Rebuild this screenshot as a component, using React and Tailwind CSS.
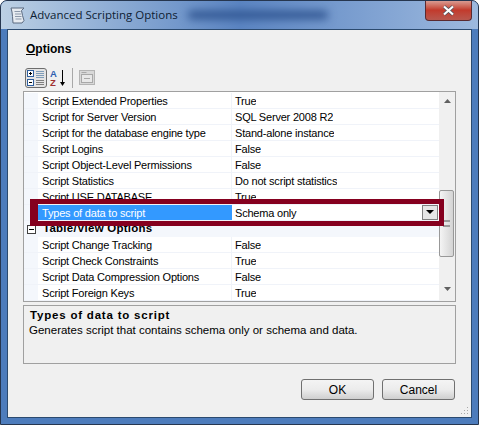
import React from 'react';

const topRows = [
    ['Script Extended Properties', 'True'],
    ['Script for Server Version', 'SQL Server 2008 R2'],
    ['Script for the database engine type', 'Stand-alone instance'],
    ['Script Logins', 'False'],
    ['Script Object-Level Permissions', 'False'],
    ['Script Statistics', 'Do not script statistics'],
    ['Script USE DATABASE', 'True'],
];

const tableRows = [
    ['Script Change Tracking', 'False'],
    ['Script Check Constraints', 'True'],
    ['Script Data Compression Options', 'False'],
    ['Script Foreign Keys', 'True'],
];

const Row = ({ name, value }) => (
    <div className="flex h-4 border-b border-[#f0f3f9]">
        <div className="w-[14px] shrink-0 bg-[#f4f7fc]" />
        <div className="w-[194px] shrink-0 pl-1 leading-[17px] truncate border-r border-[#f0f3f9]">{name}</div>
        <div className="pl-[3px] leading-[17px] truncate">{value}</div>
    </div>
);

const CategorizedIcon = () => (
    <svg width="18" height="16" viewBox="0 0 18 16">
        <rect x="0.5" y="0.5" width="6" height="6" fill="#fff" stroke="#2f5f9e" />
        <path d="M2 3.5h3M3.5 2v3" stroke="#000" />
        <rect x="0.5" y="9.5" width="6" height="6" fill="#fff" stroke="#2f5f9e" />
        <path d="M2 12.5h3" stroke="#000" />
        <path d="M9 1.5h8M9 3.5h8M9 5.5h8M9 7.5h8" stroke="#7f9db9" />
        <path d="M9 10.5h8M9 12.5h8M9 14.5h8" stroke="#7f7f7f" />
    </svg>
);

// A and Z stacked in two separate labels so they do not collide
const SortIcon = () => (
    <div className="flex items-start">
        <div className="flex w-[9px] flex-col text-[9.5px] font-bold leading-[9px]">
            <span className="text-[#2f5fb0]">A</span>
            <span className="text-[#a03030]">Z</span>
        </div>
        <svg width="7" height="18" viewBox="0 0 7 18">
            <path d="M3.5 1v13" stroke="#000" />
            <path d="M1 13h5l-2.5 4z" fill="#000" />
        </svg>
    </div>
);

const PagesIcon = () => (
    <svg width="16" height="15" viewBox="0 0 16 15">
        <rect x="0.5" y="0.5" width="15" height="14" fill="#d8d8d8" stroke="#b4b4b4" />
        <rect x="2.5" y="4.5" width="11" height="8" fill="#e8e8e8" stroke="#a8a8a8" />
        <path d="M2.5 2.5h5M5 8.5h6" stroke="#a8a8a8" />
    </svg>
);

const ScrollIcon = () => (
    <svg width="17" height="17" viewBox="0 0 17 17">
        <path d="M2 1h13l-2.5 2.5 1 5 1.5 5-2 2.5H4l-.5-6.5L3 5z" fill="#e6ebf1" stroke="#5b6a80" />
        <path d="M5.5 4.5h6M6 7h6M6 9.5h6.5M6.5 12h6" stroke="#8b98aa" />
    </svg>
);

const Btn = ({ children }) => (
    <button className="w-[73px] h-[21px] rounded-[3px] border border-[#707070] bg-gradient-to-b from-[#f4f4f4] via-[#ececec] to-[#cfcfcf] text-[12px] leading-none text-black">
        {children}
    </button>
);

export default function App() {
    return (
        <div
            className="relative w-[479px] h-[425px] flex flex-col overflow-hidden rounded-t-[7px] border border-[#26364f] bg-[#4d7cbc] text-[11px] text-black font-['Liberation_Sans',Arial,sans-serif]"
        >
            <div className="flex h-[28px] shrink-0 items-center pl-[8px] bg-gradient-to-r from-[#bcd0e4] via-[#5b85c2] to-[#9db9de]">
                <ScrollIcon />
                <span className="ml-[4px] text-[11.5px] text-[#0e1d33] font-['Open_Sans',sans-serif]">
                    Advanced Scripting Options
                </span>
                <div className="ml-[10px] w-[140px] h-[8px] rounded-full bg-[#2f5490] blur-[4px]" />
            </div>

            {/* close button */}
            <div className="absolute top-[-1px] right-[6px] flex h-[21px] w-[47px] items-center justify-center rounded-b-[4px] border border-t-0 border-[#5a2a30] bg-gradient-to-b from-[#d9a49c] via-[#c23a2c] to-[#b8574e]">
                <svg width="13" height="11" viewBox="0 0 13 11">
                    <path d="M2 1.5l9 8M11 1.5l-9 8" stroke="#4a5560" strokeWidth="3.6" />
                    <path d="M2 1.5l9 8M11 1.5l-9 8" stroke="#fff" strokeWidth="2.2" />
                </svg>
            </div>

            <div className="relative mx-[6px] flex h-[389px] flex-col border border-[#2b4a6f] bg-[#f0f0f0] pl-[15px] pr-[15px]">
                <div className="mt-[12px] ml-[3px] h-[14px] text-[12px] font-bold leading-[14px]">
                    <span className="underline">O</span>ptions
                </div>

                <div className="mt-[11px] flex h-[21px] items-center">
                    <div className="ml-[2px] flex h-[20px] w-[22px] items-center justify-center rounded-[3px] border border-[#6d6d6d] bg-[#e4e4e4]">
                        <CategorizedIcon />
                    </div>
                    <div className="ml-[3px]"><SortIcon /></div>
                    <div className="ml-[6px] h-[20px] w-px bg-[#a8a8a8]" />
                    <div className="ml-[6px]"><PagesIcon /></div>
                </div>

                <div className="mt-[3px] flex h-[211px] border border-[#a0a0a0] bg-white">
                    <div className="min-w-0 flex-1 overflow-hidden pt-px tracking-[-0.2px]">
                        {topRows.map(([n, v]) => <Row key={n} name={n} value={v} />)}
                        <div className="flex h-4 border-b border-[#f0f3f9]">
                            <div className="w-[14px] shrink-0 bg-[#f4f7fc]" />
                            <div className="w-[194px] shrink-0 bg-[#3399ff] pl-1 leading-[17px] text-white">Types of data to script</div>
                            <div className="flex-1 pl-[3px] leading-[17px]">Schema only</div>
                            <div className="mr-px flex h-[15px] w-4 items-center justify-center border border-[#808080] bg-[#e6e6e6]">
                                <svg width="8" height="5" viewBox="0 0 8 5"><path d="M0 0h8L4 4z" fill="#000" /></svg>
                            </div>
                        </div>
                        <div className="flex h-4 items-center bg-[#f4f7fc]">
                            <div className="flex w-[14px] shrink-0 justify-center">
                                <div className="flex h-[9px] w-[9px] items-center justify-center border border-[#404040] bg-white">
                                    <div className="h-px w-[5px] bg-black" />
                                </div>
                            </div>
                            <div className="pl-[5px] text-[11.5px] font-bold tracking-[0.25px]">Table/View Options</div>
                        </div>
                        {tableRows.map(([n, v]) => <Row key={n} name={n} value={v} />)}
                    </div>

                    <div className="flex w-4 shrink-0 flex-col items-center bg-[#f0f0f0]">
                        <svg className="mt-[7px]" width="7" height="4" viewBox="0 0 7 4"><path d="M3.5 0L7 4H0z" fill="#606060" /></svg>
                        <div className="mt-[87px] flex h-[67px] w-[15px] items-center justify-center self-start rounded-[2px] border border-[#989898] bg-gradient-to-r from-[#f4f4f4] to-[#d4d4d4]">
                            <div className="h-[7px] w-[7px] border-y-2 border-[#9a9a9a]" />
                        </div>
                        <svg className="mt-[30px]" width="7" height="4" viewBox="0 0 7 4"><path d="M0 0h7L3.5 4z" fill="#606060" /></svg>
                    </div>
                </div>

                <div className="mt-[3px] h-[59px] border border-[#a0a0a0] px-[5px] pt-[2px] text-[11.5px] leading-[15px]">
                    <div className="pl-px font-bold tracking-[0.8px]">Types of data to script</div>
                    <div>Generates script that contains schema only or schema and data.</div>
                </div>

                <div className="mt-[15px] flex justify-end gap-2 pr-px">
                    <Btn>OK</Btn>
                    <Btn>Cancel</Btn>
                </div>

                {/* size grip */}
                <svg className="absolute bottom-[2px] right-[2px]" width="9" height="9" viewBox="0 0 9 9">
                    <path d="M7 1h1v1H7zM4 4h1v1H4zM7 4h1v1H7zM1 7h1v1H1zM4 7h1v1H4zM7 7h1v1H7z" fill="#a8a8a8" />
                </svg>
            </div>

            {/* maroon highlight drawn over the selected row */}
            <div className="pointer-events-none absolute left-[29px] top-[198px] h-[27px] w-[414px] border-y-[5px] border-l-[8px] border-r-[5px] border-[#85001f]" />
        </div>
    );
}
